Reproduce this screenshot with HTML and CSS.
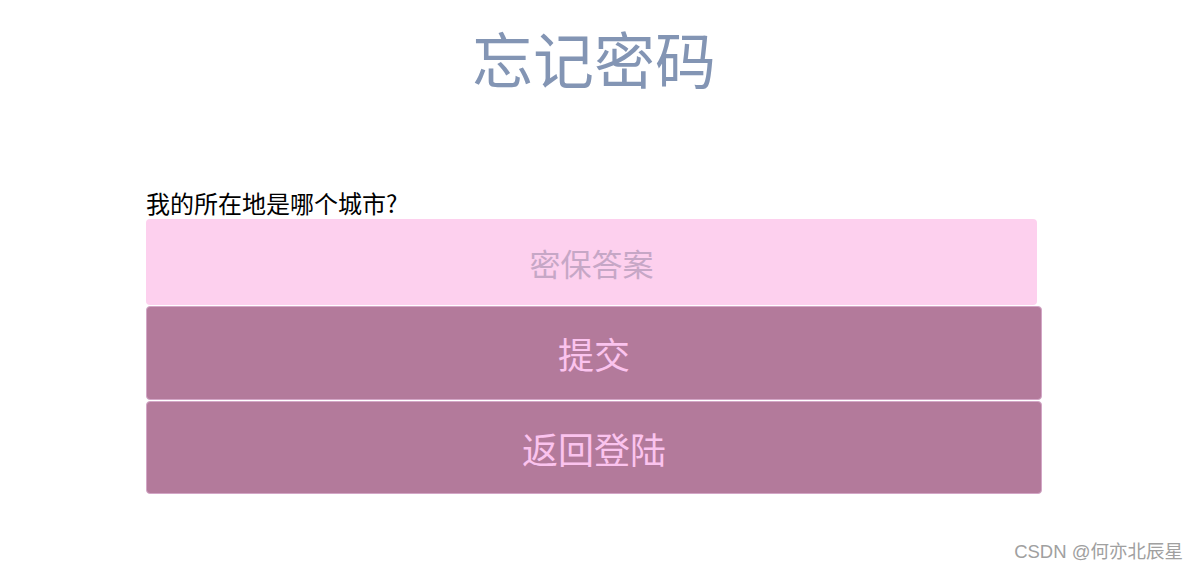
FILE: index.html
```html
<!DOCTYPE html>
<html lang="zh">
<head>
<meta charset="utf-8">
<link rel="stylesheet" href="styles.css">
</head>
<body>
<div class="page">
  <div class="form">
    <h1 class="title">忘记密码</h1>
    <label class="question">我的所在地是哪个城市?</label>
    <input class="answer" type="text" placeholder="密保答案">
    <button class="btn">提交</button>
    <button class="btn">返回登陆</button>
  </div>
</div>
<div class="watermark">CSDN @何亦北辰星</div>
</body>
</html>
```
FILE: styles.css
```css
html, body {
  margin: 0;
  padding: 0;
  background: #ffffff;
  font-family: "Noto Sans CJK SC", "Noto Sans", sans-serif;
}
.page {
  width: 1199px;
  height: 568px;
  position: relative;
}
.form {
  margin-left: 146px;
  width: 896px;
  display: flex;
  flex-direction: column;
  padding-top: 27px;
}
.title {
  margin: 0;
  font-size: 61px;
  line-height: 61px;
  font-weight: normal;
  color: #8395b4;
  text-align: center;
}
.question {
  margin-top: 103px;
  font-size: 24px;
  line-height: 24px;
  color: #000;
}
.answer {
  margin-top: 4px;
  width: 891px;
  height: 86px;
  box-sizing: border-box;
  border: none;
  border-radius: 4px;
  background: #fdd0ee;
  font-family: inherit;
  font-size: 31px;
  text-align: center;
  outline: none;
  padding: 0;
}
.answer::placeholder {
  color: #c6a7c6;
}
.btn {
  margin-top: 1px;
  width: 896px;
  height: 94px;
  box-sizing: border-box;
  border: 1px solid #d3a6c6;
  border-radius: 4px;
  background: #b37a9b;
  color: #fbc3ee;
  font-family: inherit;
  font-size: 36px;
  padding: 0;
}
.btn + .btn {
  margin-top: 1px;
  height: 93px;
}
.watermark {
  position: absolute;
  right: 16px;
  top: 537px;
  font-family: "Liberation Sans", "Noto Sans CJK SC", sans-serif;
  font-size: 18.5px;
  color: #a0a0a0;
}
```
